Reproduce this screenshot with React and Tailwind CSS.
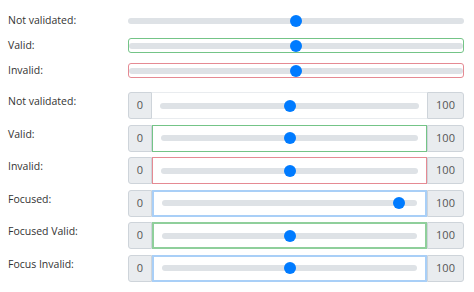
import React from "react";

const font = { fontFamily: '"Open Sans", "Noto Sans", sans-serif' };

function Thumb({ pct }) {
  return (
    <div
      className="absolute top-1/2 w-[12px] h-[12px] -mt-[6px] rounded-full bg-[#007bff]"
      style={{ left: `calc((100% - 12px) * ${pct / 100})` }}
    />
  );
}

function Track({ pct }) {
  return (
    <div className="relative flex-1 h-[12px] flex items-center">
      <div className="w-full h-[6px] rounded-full bg-[#dee2e6]" />
      <Thumb pct={pct} />
    </div>
  );
}

function PlainRow({ label, border }) {
  return (
    <div className="flex items-center h-[15px]">
      <div className="w-[120px] text-[10.5px] text-[#333] leading-[15px]">{label}</div>
      <div
        className={`flex-1 h-[15px] flex items-center rounded-[3px] ${
          border ? `border ${border}` : ""
        }`}
      >
        <Track pct={50} />
      </div>
    </div>
  );
}

function GroupRow({ label, borderCls, pct = 50 }) {
  return (
    <div className="flex items-start">
      <div className="w-[120px] text-[10.5px] text-[#333] leading-[16px] pt-[1px]">{label}</div>
      <div className="flex-1 flex h-[27px]">
        <div className="w-[24px] flex items-center justify-center bg-[#e9ecef] border border-[#ced4da] rounded-l-[3px] text-[11px] text-[#555]">
          0
        </div>
        <div className={`flex-1 flex items-center bg-white px-[8px] ${borderCls}`}>
          <Track pct={pct} />
        </div>
        <div className="w-[37px] flex items-center justify-center bg-[#e9ecef] border border-[#ced4da] rounded-r-[3px] text-[11px] text-[#555]">
          100
        </div>
      </div>
    </div>
  );
}

export default function App() {
  return (
    <div className="w-[474px] h-[292px] bg-white pl-[8px] pr-[10px] pt-[13px]" style={font}>
      <div className="flex flex-col gap-[10px]">
        <PlainRow label="Not validated:" />
        <PlainRow label="Valid:" border="border-[#74c487]" />
        <PlainRow label="Invalid:" border="border-[#e58a93]" />
      </div>
      <div className="flex flex-col gap-[5.5px] mt-[14px]">
        <GroupRow label="Not validated:" borderCls="border-y border-[#e9ecef]" />
        <GroupRow label="Valid:" borderCls="border border-[#74c487]" />
        <GroupRow label="Invalid:" borderCls="border border-[#e58a93]" />
        <GroupRow label="Focused:" borderCls="border-2 border-[#a9cff7]" pct={95} />
        <GroupRow label="Focused Valid:" borderCls="border-2 border-[#8fcf9b]" />
        <GroupRow label="Focus Invalid:" borderCls="border-2 border-[#a9cff7]" />
      </div>
    </div>
  );
}
